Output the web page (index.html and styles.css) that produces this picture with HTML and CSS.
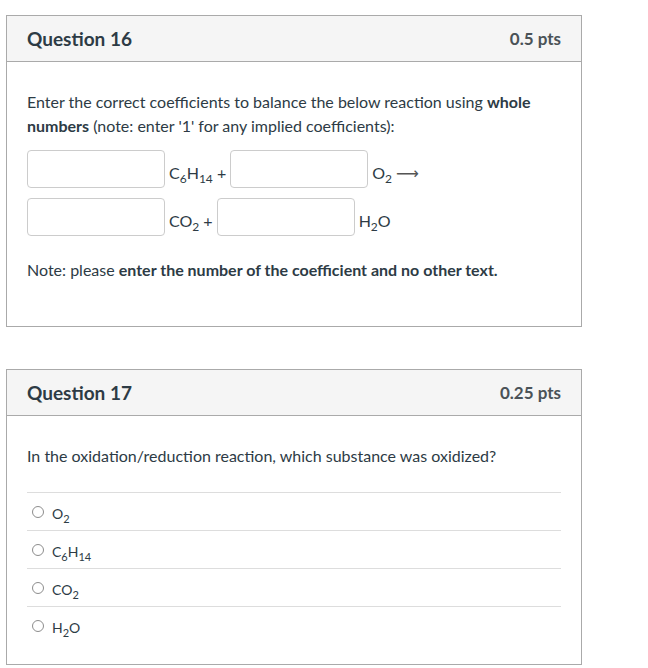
FILE: index.html
```html
<!DOCTYPE html>
<html>
<head>
<meta charset="utf-8">
<link rel="stylesheet" href="styles.css">
</head>
<body>
<div class="page">
  <section class="question">
    <header class="q-header">
      <h2 class="q-title">Question 16</h2>
      <span class="q-points">0.5 pts</span>
    </header>
    <div class="q-body q16">
      <p class="q-text">Enter the correct coefficients to balance the below reaction using <strong>whole numbers</strong> (note: enter '1' for any implied coefficients):</p>
      <div class="eq-rows">
        <div class="eq-row">
          <input class="coef" type="text">
          <span class="formula">C<sub>6</sub>H<sub>14</sub> +</span>
          <input class="coef" type="text">
          <span class="formula">O<sub>2</sub> <span class="arrow">⟶</span></span>
        </div>
        <div class="eq-row">
          <input class="coef" type="text">
          <span class="formula">CO<sub>2</sub> +</span>
          <input class="coef" type="text">
          <span class="formula">H<sub>2</sub>O</span>
        </div>
      </div>
      <p class="q-note">Note: please <strong>enter the number of the coefficient and no other text.</strong></p>
    </div>
  </section>

  <section class="question">
    <header class="q-header">
      <h2 class="q-title">Question 17</h2>
      <span class="q-points">0.25 pts</span>
    </header>
    <div class="q-body q17">
      <p class="q-text">In the oxidation/reduction reaction, which substance was oxidized?</p>
      <ul class="answers">
        <li class="answer"><span class="radio"></span><span class="label">O<sub>2</sub></span></li>
        <li class="answer"><span class="radio"></span><span class="label">C<sub>6</sub>H<sub>14</sub></span></li>
        <li class="answer"><span class="radio"></span><span class="label">CO<sub>2</sub></span></li>
        <li class="answer"><span class="radio"></span><span class="label">H<sub>2</sub>O</span></li>
      </ul>
    </div>
  </section>
</div>
</body>
</html>
```
FILE: styles.css
```css
* { box-sizing: border-box; }
html, body { margin: 0; padding: 0; background: #ffffff; }
body {
  font-family: Lato, "Open Sans", "Liberation Sans", sans-serif;
  color: #2d3b45;
  font-size: 16px;
}
.page {
  padding: 15px 0 0 6px;
  width: 582px;
}
.question {
  border: 1px solid #aaaaaa;
  margin-bottom: 42px;
}
.question:last-child { margin-bottom: 0; }
.q-header {
  display: flex;
  justify-content: space-between;
  align-items: center;
  height: 46px;
  padding: 0 20px;
  background: #f5f5f5;
  border-bottom: 1px solid #aaaaaa;
}
.q-title {
  margin: 0;
  font-size: 19px;
  font-weight: 700;
  color: #2d3b45;
}
.q-points {
  font-size: 17px;
  font-weight: 700;
  color: #4a5257;
}
.q-body { padding: 28px 20px 20px; }
.q-text {
  margin: 0;
  line-height: 24px;
}
.q-text strong, .q-note strong { font-weight: 700; }
.eq-rows {
  display: flex;
  flex-direction: column;
  gap: 10px;
  margin: 12px 0 22px;
}
.eq-row {
  display: flex;
  align-items: center;
  gap: 4px;
}
.coef {
  width: 138px;
  height: 38px;
  border: 1px solid #cccccc;
  border-radius: 4px;
  background: #fff;
  margin: 0;
  padding: 0 8px;
  font: inherit;
}
.formula {
  font-size: 16px;
  color: #2d3b45;
  margin-top: 7px;
  white-space: nowrap;
}
.formula sub { font-size: 12px; line-height: 0; }
.arrow {
  font-family: "DejaVu Sans", sans-serif;
  font-size: 16px;
  color: #555;
}
.q-note {
  margin: 0 0 24px;
  line-height: 24px;
}
.answers {
  list-style: none;
  margin: 24px 0 0;
  padding: 0;
}
.answer {
  display: flex;
  align-items: center;
  height: 38px;
  border-top: 1px solid #dddddd;
  padding-left: 5px;
  gap: 8px;
}
.radio {
  width: 12px;
  height: 12px;
  border: 1px solid #8d8d8d;
  border-radius: 50%;
  background: #fff;
  flex: none;
}
.label {
  font-size: 14px;
  margin-top: 3px;
}
.label sub { font-size: 11px; line-height: 0; }
```
